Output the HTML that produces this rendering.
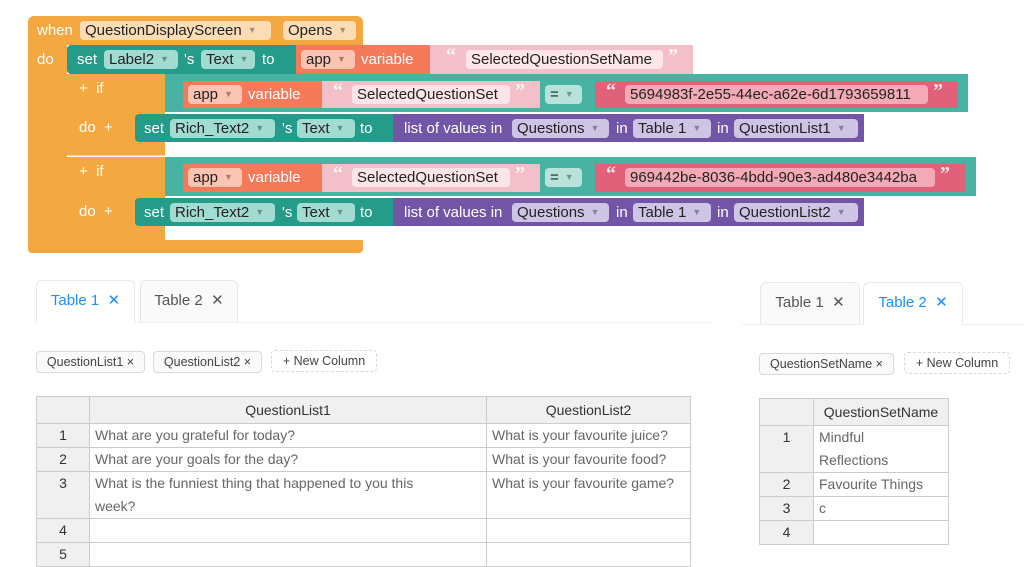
<!DOCTYPE html>
<html><head><meta charset="utf-8"><style>
*{box-sizing:border-box;margin:0;padding:0}
body{width:1024px;height:561px;background:#fff;position:relative;overflow:hidden;font-family:"Liberation Sans",Arial,sans-serif}
.a{position:absolute}
.blk{position:absolute;color:#fff;font-size:15px;line-height:28px;white-space:nowrap}
.chip{position:absolute;border-radius:4px;color:#222;font-size:15px;line-height:19px;padding:0 5px;white-space:nowrap}
.chip i{font-style:normal;font-size:9px;color:rgba(0,0,0,.35);margin-left:6px;vertical-align:2px}
.t{position:absolute;color:#fff;font-size:15px;white-space:nowrap}
.q{position:absolute;color:#fff;font-size:20px;font-weight:bold;font-family:"Liberation Serif",serif;opacity:.85}
.tab{position:absolute;border:1px solid #e8e8e8;border-bottom:none;border-radius:6px 6px 0 0;font-size:15px;color:#555;text-align:center;line-height:40px}
.tab.act{background:#fff;color:#1890ff}
.tab.in{background:#fafafa}
.tag{position:absolute;border:1px solid #d9d9d9;border-radius:4px;background:#fafafa;font-size:12.5px;color:#444;line-height:20px;text-align:center;white-space:nowrap}
.tag.d{border-style:dashed;background:#fff}
table{position:absolute;border-collapse:collapse;font-size:14px;color:#666}
td,th{border:1px solid #ccc;padding:0 5px;vertical-align:top;line-height:23px}
th{background:#f0f0f0;font-weight:normal;color:#333;line-height:26px}
td.n{background:#f0f0f0;text-align:center;color:#333}
</style></head><body>
<!-- event block -->
<div class="a" style="left:28px;top:16px;width:335px;height:29px;background:#f3a842;border-radius:6px 6px 0 0"></div>
<div class="a" style="left:28px;top:16px;width:39px;height:237px;background:#f3a842;border-radius:6px 0 0 6px"></div>
<div class="a" style="left:28px;top:240px;width:335px;height:13px;background:#f3a842;border-radius:0 0 4px 4px"></div>
<div class="t" style="left:37px;top:22px">when</div>
<div class="t" style="left:37px;top:51px">do</div>
<div class="chip" style="left:80px;top:21px;width:191px;background:#fcdcb5">QuestionDisplayScreen<i>▼</i></div>
<div class="chip" style="left:283px;top:21px;width:73px;background:#fcdcb5">Opens<i>▼</i></div>
<!-- if areas -->
<div class="a" style="left:67px;top:74px;width:98px;height:82px;background:#f3a842;border-bottom:1px solid #f8cf93"></div>
<div class="a" style="left:67px;top:157px;width:98px;height:83px;background:#f3a842"></div>
<div class="t" style="left:79px;top:80px">+ &nbsp;if</div>
<div class="t" style="left:79px;top:119px">do &nbsp;+</div>
<div class="t" style="left:79px;top:163px">+ &nbsp;if</div>
<div class="t" style="left:79px;top:203px">do &nbsp;+</div>
<!-- set label2 -->
<div class="blk" style="left:67px;top:45px;width:231px;height:29px;background:#259b89;border-radius:4px 0 0 4px"></div>
<div class="t" style="left:77px;top:51px">set</div>
<div class="chip" style="left:104px;top:50px;width:74px;background:#a2dbd1">Label2<i>▼</i></div>
<div class="t" style="left:184px;top:51px">'s</div>
<div class="chip" style="left:201px;top:50px;width:54px;background:#a2dbd1">Text<i>▼</i></div>
<div class="t" style="left:262px;top:51px">to</div>
<div class="blk" style="left:296px;top:45px;width:135px;height:29px;background:#f47a5a"></div>
<div class="chip" style="left:301px;top:50px;width:54px;background:#fbc4b2">app<i>▼</i></div>
<div class="t" style="left:361px;top:51px">variable</div>
<div class="blk" style="left:430px;top:45px;width:263px;height:29px;background:#f3c0c9"></div>
<div class="q" style="left:446px;top:45px">“</div>
<div class="chip" style="left:466px;top:50px;width:197px;background:#fde5e9">SelectedQuestionSetName</div>
<div class="q" style="left:668px;top:45px">”</div>
<!-- if 1 condition -->
<div class="blk" style="left:165px;top:74px;width:803px;height:38px;background:#48b2a3"></div>
<div class="blk" style="left:183px;top:81px;width:140px;height:27px;background:#f47a5a"></div>
<div class="chip" style="left:188px;top:85px;width:54px;background:#fbc4b2">app<i>▼</i></div>
<div class="t" style="left:248px;top:86px">variable</div>
<div class="blk" style="left:322px;top:81px;width:218px;height:27px;background:#f3c0c9"></div>
<div class="q" style="left:333px;top:80px">“</div>
<div class="chip" style="left:352px;top:85px;width:158px;background:#fde5e9">SelectedQuestionSet</div>
<div class="q" style="left:515px;top:80px">”</div>
<div class="chip" style="left:545px;top:85px;width:37px;background:#b7e3da">=<i>▼</i></div>
<div class="blk" style="left:595px;top:81px;width:363px;height:27px;background:#e1607a"></div>
<div class="q" style="left:606px;top:80px">“</div>
<div class="chip" style="left:625px;top:85px;width:303px;background:#f3a9b6">5694983f-2e55-44ec-a62e-6d1793659811</div>
<div class="q" style="left:933px;top:80px">”</div>
<!-- do 1 -->
<div class="blk" style="left:135px;top:114px;width:258px;height:28px;background:#259b89;border-radius:4px 0 0 4px"></div>
<div class="t" style="left:144px;top:120px">set</div>
<div class="chip" style="left:170px;top:119px;width:105px;background:#a2dbd1">Rich_Text2<i>▼</i></div>
<div class="t" style="left:282px;top:120px">'s</div>
<div class="chip" style="left:297px;top:119px;width:58px;background:#a2dbd1">Text<i>▼</i></div>
<div class="t" style="left:360px;top:120px">to</div>
<div class="blk" style="left:393px;top:114px;width:471px;height:28px;background:#7355a8"></div>
<div class="t" style="left:404px;top:120px">list of values in</div>
<div class="chip" style="left:512px;top:119px;width:97px;background:#cec4e6">Questions<i>▼</i></div>
<div class="t" style="left:616px;top:120px">in</div>
<div class="chip" style="left:633px;top:119px;width:78px;background:#cec4e6">Table 1<i>▼</i></div>
<div class="t" style="left:717px;top:120px">in</div>
<div class="chip" style="left:734px;top:119px;width:124px;background:#cec4e6">QuestionList1<i>▼</i></div>
<!-- if 2 condition -->
<div class="blk" style="left:165px;top:157px;width:811px;height:39px;background:#48b2a3"></div>
<div class="blk" style="left:183px;top:164px;width:140px;height:28px;background:#f47a5a"></div>
<div class="chip" style="left:188px;top:168px;width:54px;background:#fbc4b2">app<i>▼</i></div>
<div class="t" style="left:248px;top:169px">variable</div>
<div class="blk" style="left:322px;top:164px;width:218px;height:28px;background:#f3c0c9"></div>
<div class="q" style="left:333px;top:163px">“</div>
<div class="chip" style="left:352px;top:168px;width:158px;background:#fde5e9">SelectedQuestionSet</div>
<div class="q" style="left:515px;top:163px">”</div>
<div class="chip" style="left:545px;top:168px;width:37px;background:#b7e3da">=<i>▼</i></div>
<div class="blk" style="left:595px;top:164px;width:370px;height:28px;background:#e1607a"></div>
<div class="q" style="left:606px;top:163px">“</div>
<div class="chip" style="left:625px;top:168px;width:310px;background:#f3a9b6">969442be-8036-4bdd-90e3-ad480e3442ba</div>
<div class="q" style="left:940px;top:163px">”</div>
<!-- do 2 -->
<div class="blk" style="left:135px;top:198px;width:258px;height:28px;background:#259b89;border-radius:4px 0 0 4px"></div>
<div class="t" style="left:144px;top:204px">set</div>
<div class="chip" style="left:170px;top:203px;width:105px;background:#a2dbd1">Rich_Text2<i>▼</i></div>
<div class="t" style="left:282px;top:204px">'s</div>
<div class="chip" style="left:297px;top:203px;width:58px;background:#a2dbd1">Text<i>▼</i></div>
<div class="t" style="left:360px;top:204px">to</div>
<div class="blk" style="left:393px;top:198px;width:471px;height:28px;background:#7355a8"></div>
<div class="t" style="left:404px;top:204px">list of values in</div>
<div class="chip" style="left:512px;top:203px;width:97px;background:#cec4e6">Questions<i>▼</i></div>
<div class="t" style="left:616px;top:204px">in</div>
<div class="chip" style="left:633px;top:203px;width:78px;background:#cec4e6">Table 1<i>▼</i></div>
<div class="t" style="left:717px;top:204px">in</div>
<div class="chip" style="left:734px;top:203px;width:124px;background:#cec4e6">QuestionList2<i>▼</i></div>

<!-- left tables -->
<div class="a" style="left:36px;top:322px;width:677px;height:1px;background:#eee"></div>
<div class="tab act" style="left:36px;top:280px;width:99px;height:43px">Table 1 &nbsp;✕</div>
<div class="tab in" style="left:140px;top:280px;width:98px;height:42px">Table 2 &nbsp;✕</div>
<div class="tag" style="left:36px;top:351px;width:109px">QuestionList1 ×</div>
<div class="tag" style="left:153px;top:351px;width:109px">QuestionList2 ×</div>
<div class="tag d" style="left:271px;top:350px;width:106px">+ New Column</div>
<table style="left:36px;top:396px;width:655px">
<tr><th style="width:53px"></th><th style="width:397px">QuestionList1</th><th>QuestionList2</th></tr>
<tr><td class="n">1</td><td>What are you grateful for today?</td><td>What is your favourite juice?</td></tr>
<tr><td class="n">2</td><td>What are your goals for the day?</td><td>What is your favourite food?</td></tr>
<tr><td class="n">3</td><td>What is the funniest thing that happened to you this<br>week?</td><td>What is your favourite game?</td></tr>
<tr><td class="n">4</td><td></td><td></td></tr>
<tr><td class="n">5</td><td></td><td></td></tr>
</table>
<!-- right tables -->
<div class="a" style="left:742px;top:324px;width:282px;height:1px;background:#eee"></div>
<div class="tab in" style="left:760px;top:282px;width:100px;height:42px">Table 1 &nbsp;✕</div>
<div class="tab act" style="left:863px;top:282px;width:100px;height:43px">Table 2 &nbsp;✕</div>
<div class="tag" style="left:759px;top:353px;width:135px">QuestionSetName ×</div>
<div class="tag d" style="left:904px;top:352px;width:106px">+ New Column</div>
<table style="left:759px;top:398px;width:190px">
<tr><th style="width:54px"></th><th>QuestionSetName</th></tr>
<tr><td class="n">1</td><td>Mindful<br>Reflections</td></tr>
<tr><td class="n">2</td><td>Favourite Things</td></tr>
<tr><td class="n">3</td><td>c</td></tr>
<tr><td class="n">4</td><td></td></tr>
</table>
</body></html>
